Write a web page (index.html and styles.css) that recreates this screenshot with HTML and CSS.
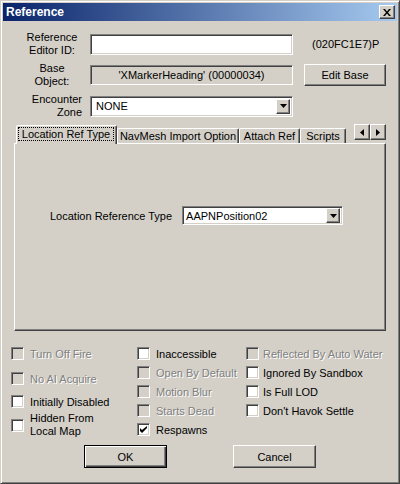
FILE: index.html
```html
<!DOCTYPE html>
<html>
<head>
<meta charset="utf-8">
<title>Reference</title>
<link rel="stylesheet" href="styles.css">
</head>
<body>
<div class="window">
  <div class="titlebar">
    <span class="title">Reference</span>
    <span class="tbtn"><svg width="8" height="7" viewBox="0 0 8 7"><path d="M0 0h2l2 2.4L6 0h2L5 3.5 8 7H6L4 4.6 2 7H0l3-3.5z" fill="#000"/></svg></span>
  </div>
  <div class="content">
    <div class="form">
      <div class="lbl c">Reference<br>Editor ID:</div>
      <div class="input sunken"></div>
      <div class="formid">(020FC1E7)P</div>
      <div class="lbl c">Base<br>Object:</div>
      <div class="field sunken">'XMarkerHeading' (00000034)</div>
      <div class="btn raised editbase">Edit Base</div>
      <div class="lbl r">Encounter<br>Zone</div>
      <div class="select sunken"><span class="val">NONE</span><span class="arrow raised"><svg width="7" height="4" viewBox="0 0 7 4"><path d="M0 0h7L3.5 4z" fill="#000"/></svg></span></div>
    </div>

    <div class="tabstrip">
      <div class="tab sel"><span class="focus">Location Ref Type</span></div>
      <div class="tab t2">NavMesh Import Option</div>
      <div class="tab t3">Attach Ref</div>
      <div class="tab t4">Scripts</div>
      <div class="scroll">
        <span class="sbtn raised"><svg width="4" height="7" viewBox="0 0 4 7"><path d="M4 0v7L0 3.5z" fill="#000"/></svg></span>
        <span class="sbtn raised"><svg width="4" height="7" viewBox="0 0 4 7"><path d="M0 0v7L4 3.5z" fill="#000"/></svg></span>
      </div>
    </div>
    <div class="panel">
      <div class="prow">
        <span class="plbl">Location Reference Type</span>
        <div class="select sunken pselect"><span class="val">AAPNPosition02</span><span class="arrow raised"><svg width="7" height="4" viewBox="0 0 7 4"><path d="M0 0h7L3.5 4z" fill="#000"/></svg></span></div>
      </div>
    </div>

    <div class="checks">
      <div class="col col1">
        <div class="cb dis"><span class="box"></span><span class="txt">Turn Off Fire</span></div>
        <div class="cb dis g6"><span class="box"></span><span class="txt">No AI Acquire</span></div>
        <div class="cb g4"><span class="box"></span><span class="txt">Initially Disabled</span></div>
        <div class="cb two g1"><span class="box"></span><span class="txt">Hidden From<br>Local Map</span></div>
      </div>
      <div class="col col2">
        <div class="cb"><span class="box"></span><span class="txt">Inaccessible</span></div>
        <div class="cb dis"><span class="box"></span><span class="txt">Open By Default</span></div>
        <div class="cb dis"><span class="box"></span><span class="txt">Motion Blur</span></div>
        <div class="cb dis"><span class="box"></span><span class="txt">Starts Dead</span></div>
        <div class="cb"><span class="box"><svg width="7" height="7" viewBox="0 0 7 7"><path d="M0 2v3l2 2 5-5V-0L2 4z" fill="#000"/></svg></span><span class="txt">Respawns</span></div>
      </div>
      <div class="col col3">
        <div class="cb dis"><span class="box"></span><span class="txt">Reflected By Auto Water</span></div>
        <div class="cb"><span class="box"></span><span class="txt">Ignored By Sandbox</span></div>
        <div class="cb"><span class="box"></span><span class="txt">Is Full LOD</span></div>
        <div class="cb"><span class="box"></span><span class="txt">Don't Havok Settle</span></div>
      </div>
    </div>

    <div class="buttons">
      <div class="btn default">OK</div>
      <div class="btn raised">Cancel</div>
    </div>
  </div>
</div>
</body>
</html>
```

FILE: styles.css
```css
* { box-sizing: border-box; }
html, body { margin: 0; padding: 0; }
body {
  width: 400px;
  height: 484px;
  overflow: hidden;
  background: #d4d0c8;
  font-family: "Liberation Sans", Arial, sans-serif;
  font-size: 11px;
  color: #000;
}

.raised {
  border: 1px solid;
  border-color: #fff #404040 #404040 #fff;
  box-shadow: inset -1px -1px #808080;
  background: #d4d0c8;
}
.sunken {
  border: 1px solid;
  border-color: #808080 #fff #fff #808080;
  box-shadow: inset 1px 1px #404040, inset -1px -1px #d4d0c8;
}

.window {
  width: 400px;
  height: 484px;
  background: #d4d0c8;
  border: 1px solid;
  border-color: #d4d0c8 #404040 #404040 #d4d0c8;
  box-shadow: inset 1px 1px #fff, inset -1px -1px #808080;
  padding: 2px;
  display: flex;
  flex-direction: column;
}

.titlebar {
  height: 18px;
  flex: none;
  background: linear-gradient(to right, #0a246a, #a6caf0);
  display: flex;
  align-items: center;
  justify-content: space-between;
  padding: 0 2px 0 3px;
}
.title {
  color: #fff;
  font-weight: bold;
  font-size: 12px;
}
.tbtn {
  width: 16px;
  height: 14px;
  background: #d4d0c8;
  border: 1px solid;
  border-color: #fff #404040 #404040 #fff;
  box-shadow: inset -1px -1px #808080;
  display: flex;
  align-items: center;
  justify-content: center;
}

.content {
  display: flex;
  flex-direction: column;
}

/* top form */
.form {
  margin: 9px 0 0 17px;
  display: grid;
  grid-template-columns: 64px 203px 87px;
  grid-template-rows: repeat(3, 28px);
  column-gap: 6px;
  row-gap: 3px;
  align-items: center;
}
.lbl { line-height: 13px; }
.lbl.c { text-align: center; }
.lbl.r { text-align: right; padding-right: 2px; }
.input {
  height: 21px;
  background: #fff;
}
.formid { padding-left: 13px; }
.field {
  height: 20px;
  background: #d4d0c8;
  display: flex;
  align-items: center;
  justify-content: center;
}
.btn {
  width: 83px;
  height: 23px;
  display: flex;
  align-items: center;
  justify-content: center;
}
.editbase {
  justify-self: end;
  width: 82px;
  height: 22px;
}
.select {
  height: 21px;
  background: #fff;
  display: flex;
  align-items: center;
  padding: 2px 2px 2px 5px;
}
.select .val { flex: 1; }
.arrow {
  width: 14px;
  height: 15px;
  display: flex;
  align-items: center;
  justify-content: center;
}

/* tabs */
.tabstrip {
  margin: 4px 0 0 11px;
  width: 372px;
  height: 19px;
  display: flex;
  align-items: flex-end;
  padding-left: 2px;
}
.tab {
  height: 15px;
  border-top: 1px solid #fff;
  border-left: 1px solid #fff;
  border-right: 1px solid #404040;
  box-shadow: inset -1px 0 #808080;
  border-radius: 2px 2px 0 0;
  display: flex;
  align-items: center;
  justify-content: center;
  white-space: nowrap;
  background: #d4d0c8;
}
.tab.sel {
  width: 101px;
  height: 19px;
  margin-bottom: -1px;
  position: relative;
  z-index: 1;
  padding: 1px 2px 3px 1px;
  align-items: stretch;
}
.focus {
  flex: 1;
  border: 1px dotted #000;
  display: flex;
  align-items: center;
  justify-content: center;
}
.t2 { width: 122px; }
.t3 { width: 61px; }
.t4 { width: 46px; }
.scroll {
  margin-left: auto;
  align-self: flex-start;
  display: flex;
}
.sbtn {
  width: 16px;
  height: 16px;
  display: flex;
  align-items: center;
  justify-content: center;
}

.panel {
  margin-left: 11px;
  width: 372px;
  height: 188px;
  border: 1px solid;
  border-color: #fff #404040 #404040 #fff;
  box-shadow: inset -1px -1px #808080;
  padding: 62px 0 0 35px;
}
.prow {
  display: flex;
  align-items: center;
  gap: 10px;
}
.pselect {
  width: 161px;
  height: 19px;
  padding-left: 3px;
}
.pselect .arrow { height: 15px; }

/* checkboxes */
.checks {
  margin: 13px 0 0 8px;
  display: grid;
  grid-template-columns: 126px 109px 1fr;
  align-items: start;
}
.col {
  display: flex;
  flex-direction: column;
}
.cb {
  display: flex;
  align-items: center;
  gap: 6px;
  height: 19px;
  white-space: nowrap;
}
.col3 .cb { gap: 4px; }
.cb.two { height: 26px; line-height: 13px; }
.g6 { margin-top: 6px; }
.g4 { margin-top: 4px; }
.g1 { margin-top: 1px; }
.box {
  width: 13px;
  height: 13px;
  flex: none;
  background: #fff;
  border: 1px solid;
  border-color: #808080 #fff #fff #808080;
  box-shadow: inset 1px 1px #404040, inset -1px -1px #d4d0c8;
  display: flex;
  align-items: center;
  justify-content: center;
}
.dis .box { background: #d4d0c8; }
.dis .txt {
  color: #808080;
  text-shadow: 1px 1px #fff;
}

/* bottom buttons */
.buttons {
  margin-top: 6px;
  display: flex;
  justify-content: center;
  gap: 66px;
}
.btn.default {
  border: 1px solid #000;
  box-shadow: inset 1px 1px #fff, inset -1px -1px #404040, inset -2px -2px #808080;
}
```
